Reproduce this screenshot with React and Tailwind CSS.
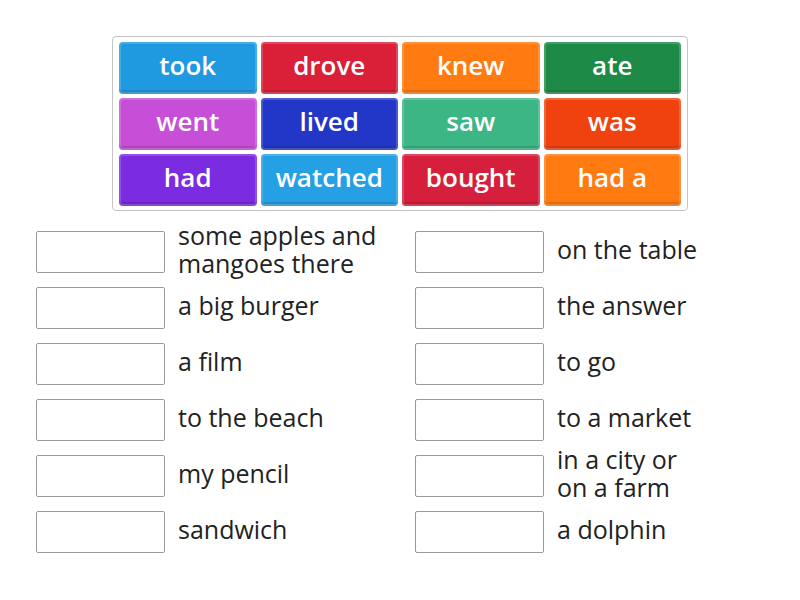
import React from "react";

const tiles = [
  ["took", "bg-[#1f9ae0]"],
  ["drove", "bg-[#d92038]"],
  ["knew", "bg-[#ff7b12]"],
  ["ate", "bg-[#1d8a48]"],
  ["went", "bg-[#c74fd8]"],
  ["lived", "bg-[#2236c8]"],
  ["saw", "bg-[#3cb684]"],
  ["was", "bg-[#f0420e]"],
  ["had", "bg-[#7b2be0]"],
  ["watched", "bg-[#25a0e5]"],
  ["bought", "bg-[#d61f3c]"],
  ["had a", "bg-[#ff7b12]"],
];

const left = [
  ["some apples and", "mangoes there"],
  ["a big burger"],
  ["a film"],
  ["to the beach"],
  ["my pencil"],
  ["sandwich"],
];
const right = [
  ["on the table"],
  ["the answer"],
  ["to go"],
  ["to a market"],
  ["in a city or", "on a farm"],
  ["a dolphin"],
];

function Row({ lines }) {
  return (
    <div className="flex items-center gap-[13px] h-[42px]">
      <div className="w-[129px] h-[42px] shrink-0 border border-[#9a9a9a] rounded-[2px] bg-white" />
      <div className="text-[25px] leading-[28px] text-[#222] relative -top-[3px]">
        {lines.map((l, i) => (
          <div key={i} className="whitespace-nowrap">{l}</div>
        ))}
      </div>
    </div>
  );
}

export default function App() {
  return (
    <div className="w-[800px] h-[600px] bg-white" style={{ fontFamily: '"Open Sans", sans-serif' }}>
      <div className="pt-[36px]">
        <div className="mx-auto w-[576px] border border-[#c4c4c4] rounded-[4px] px-[6px] pt-[5px] pb-[4px] grid grid-cols-4 gap-[4px]">
          {tiles.map(([t, c], i) => (
            <div
              key={i}
              className={`${c} h-[52px] rounded-[4px] flex items-center justify-center text-white text-[26px] font-semibold shadow-[inset_0_0_0_2px_rgba(255,255,255,0.18),inset_0_-4px_0_rgba(0,0,0,0.12)]`}
            >
              <span className="relative -top-[3px] leading-[30px]">{t}</span>
            </div>
          ))}
        </div>
      </div>
      <div className="ml-[36px] mt-[20px] grid grid-cols-[379px_379px]">
        <div className="flex flex-col gap-[14px]">
          {left.map((l, i) => (
            <Row key={i} lines={l} />
          ))}
        </div>
        <div className="flex flex-col gap-[14px]">
          {right.map((l, i) => (
            <Row key={i} lines={l} />
          ))}
        </div>
      </div>
    </div>
  );
}
